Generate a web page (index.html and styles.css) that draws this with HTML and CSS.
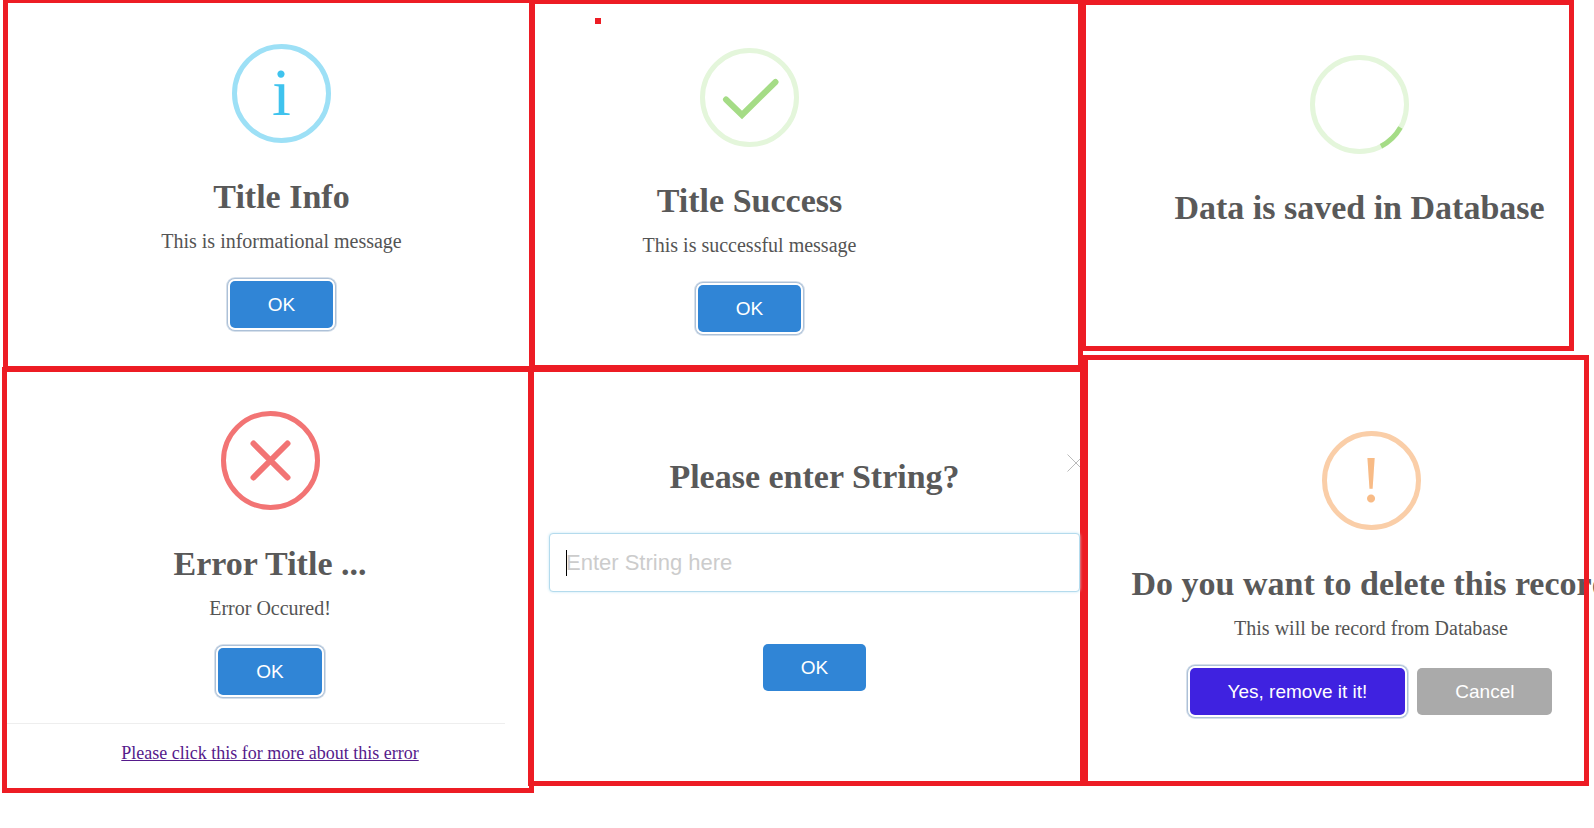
FILE: index.html
```html
<!DOCTYPE html>
<html lang="en">
<head>
  <meta charset="UTF-8">
  <meta name="viewport" content="width=device-width, initial-scale=1">
  <title>Alert dialogs</title>
  <link rel="stylesheet" href="styles.css">
</head>
<body>
  <main class="board">
    <div class="column">
      <section class="panel info">
        <div class="icon icon-info">i</div>
        <h2 class="title">Title Info</h2>
        <p class="message">This is informational message</p>
        <div class="actions">
          <button type="button" class="btn focused">OK</button>
        </div>
      </section>

      <section class="panel error">
        <div class="icon icon-error">
          <svg viewBox="0 0 99 99" aria-hidden="true">
            <path d="M32.5 32.5 66.5 66.5M66.5 32.5 32.5 66.5"/>
          </svg>
        </div>
        <h2 class="title">Error Title ...</h2>
        <p class="message">Error Occured!</p>
        <div class="actions">
          <button type="button" class="btn focused">OK</button>
        </div>
        <div class="footer"><a href="#">Please click this for more about this error</a></div>
      </section>
    </div>

    <div class="column">
      <section class="panel success">
        <span class="dot"></span>
        <div class="icon icon-success">
          <svg viewBox="0 0 99 99" aria-hidden="true">
            <path d="M26 51.5 42 67 75.5 34"/>
          </svg>
        </div>
        <h2 class="title">Title Success</h2>
        <p class="message">This is successful message</p>
        <div class="actions">
          <button type="button" class="btn focused">OK</button>
        </div>
      </section>

      <section class="panel prompt">
        <button type="button" class="close" aria-label="Close">
          <svg viewBox="0 0 18 18" aria-hidden="true"><path d="M0.5 0.5 17.5 17.5M17.5 0.5 0.5 17.5"/></svg>
        </button>
        <h2 class="title"><label for="string">Please enter String?</label></h2>
        <div class="field">
          <input type="text" id="string" class="input" placeholder="Enter String here">
          <span class="caret"></span>
        </div>
        <div class="actions">
          <button type="button" class="btn">OK</button>
        </div>
      </section>
    </div>

    <div class="column">
      <section class="panel saved">
        <div class="icon icon-success">
          <svg viewBox="0 0 99 99" aria-hidden="true">
            <path class="arc" d="M90.4 72.6A47 47 0 0 1 71 91.3"/>
          </svg>
        </div>
        <h2 class="title">Data is saved in Database</h2>
      </section>

      <section class="panel confirm">
        <div class="icon icon-warning">!</div>
        <h2 class="title">Do you want to delete this record</h2>
        <p class="message">This will be record from Database</p>
        <div class="actions">
          <button type="button" class="btn btn-remove focused">Yes, remove it it!</button>
          <button type="button" class="btn btn-cancel">Cancel</button>
        </div>
      </section>
    </div>
  </main>
</body>
</html>
```

FILE: styles.css
```css
* {
  margin: 0;
  padding: 0;
  box-sizing: border-box;
}

body {
  background: #fff;
  color: #545454;
  font-family: "Liberation Serif", "Times New Roman", serif;
  overflow-x: hidden;
}

.board {
  display: grid;
  grid-template-columns: 529fr 552fr 513fr;
  align-items: start;
}

.column {
  display: flex;
  flex-direction: column;
  min-width: 0;
}

/* panels: the borders of neighbours overlap */
.panel {
  position: relative;
  display: flex;
  flex-direction: column;
  align-items: center;
  border: 5px solid #ed1c24;
}

.info {
  margin: 0 -5px 0 3px;
  padding: 41px 0 38px 26px;
  border-top-width: 3px;
}

.error {
  margin: -4px -5px 0 2px;
  padding: 39px 0 23px 4px;
}

.success {
  margin-right: -2px;
  padding: 44px 114px 33px 0;
  border-top-width: 4px;
  border-left-width: 6px;
}

.prompt {
  margin: -3px -4px 0 -1px;
  padding: 85px 0 90px 16px;
}

.saved {
  margin-right: 20px;
  padding: 50px 0 118px 64px;
}

.confirm {
  margin: 4px 5px 0 2px;
  padding: 71px 0 66px 70px;
}

.dot {
  position: absolute;
  top: 14px;
  left: 60px;
  width: 6px;
  height: 6px;
  background: #ed1c24;
}

/* icons */
.icon {
  display: flex;
  justify-content: center;
  width: 99px;
  height: 99px;
  margin-bottom: 34px;
  border: 5px solid;
  border-radius: 50%;
  font-size: 68px;
  line-height: 86px;
}

.icon svg {
  flex: none;
  width: 99px;
  height: 99px;
  margin: -5px;
  fill: none;
  stroke-width: 6;
  stroke-linecap: round;
}

.icon-info {
  color: #3fc3ee;
  border-color: #9de0f6;
}

.icon-error {
  border-color: #f27474;
}

.icon-error svg {
  stroke: #f27474;
}

.icon-success {
  border-color: #e4f6db;
}

.icon-success svg {
  stroke: #a5dc86;
}

.icon-success .arc {
  stroke-width: 5;
  stroke-linecap: butt;
}

.icon-warning {
  color: #f8bb86;
  border-color: #facea8;
}

/* text */
.title {
  color: #595959;
  font-size: 34px;
  font-weight: bold;
  line-height: 40px;
  white-space: nowrap;
}

/* long title runs under the panel border */
.confirm .title {
  position: relative;
  z-index: -1;
}

.message {
  margin-top: 12px;
  font-size: 20px;
  line-height: 24px;
}

.footer {
  align-self: stretch;
  margin: 28px 24px 0 -4px;
  padding: 17px 0 0 28px;
  border-top: 1px solid #eee;
  font-size: 18px;
  line-height: 24px;
  text-align: center;
}

.footer a {
  color: #551a8b;
}

/* controls */
.actions {
  display: flex;
  gap: 12px;
  margin-top: 28px;
}

.btn {
  height: 47px;
  padding: 0 38px;
  border: 0;
  border-radius: 5px;
  background: #3085d6;
  color: #fff;
  font-family: "Liberation Sans", Arial, sans-serif;
  font-size: 19px;
}

.focused {
  box-shadow: 0 0 0 2px #fff, 0 0 0 3px #adc1d8, 0 0 0 4px #d6e0eb;
}

.btn-remove {
  background: #3f22e0;
}

.btn-cancel {
  background: #aaa;
}

.field {
  position: relative;
  align-self: stretch;
  margin-top: 36px;
}

.input {
  display: block;
  width: 100%;
  height: 59px;
  padding: 0 16px;
  border: 1px solid #b4dbed;
  border-radius: 4px;
  box-shadow: 0 0 3px #c4e6f5;
  font-family: "Liberation Sans", Arial, sans-serif;
  font-size: 22px;
  outline: 0;
}

.input::placeholder {
  color: #ccc;
}

.caret {
  position: absolute;
  top: 17px;
  left: 17px;
  width: 1px;
  height: 26px;
  background: #000;
}

.prompt .actions {
  margin-top: 52px;
}

.close {
  position: absolute;
  z-index: -1;
  top: 82px;
  right: -5px;
  width: 18px;
  height: 18px;
  border: 0;
  background: none;
}

.close svg {
  display: block;
  stroke: #bbb;
}
```
